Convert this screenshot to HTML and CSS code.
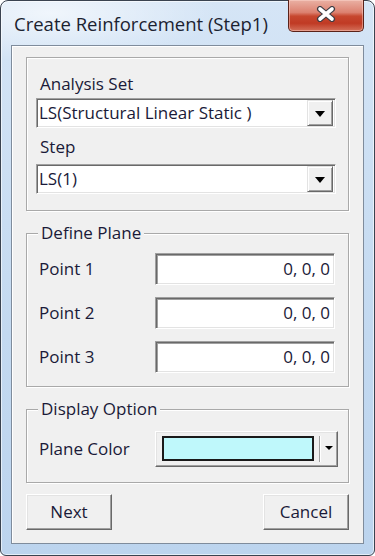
FILE: index.html
```
<!DOCTYPE html>
<html>
<head>
<meta charset="utf-8">
<link rel="stylesheet" href="styles.css">
</head>
<body>
<div class="window">
  <div class="titlebar">
    <span class="title">Create Reinforcement (Step1)</span>
    <div class="close">
      <svg width="20" height="16" viewBox="0 0 20 16">
        <path d="M4 3 L16 13 M16 3 L4 13" stroke="#3c3c44" stroke-width="6" stroke-linecap="round"/>
        <path d="M4 3 L16 13 M16 3 L4 13" stroke="#ffffff" stroke-width="3.6" stroke-linecap="round"/>
      </svg>
    </div>
  </div>
  <div class="client">
    <div class="group g1">
      <div class="label">Analysis Set</div>
      <div class="combo">
        <span class="combo-text">LS(Structural Linear Static )</span>
        <span class="combo-btn"><span class="tri"></span></span>
      </div>
      <div class="label label-step">Step</div>
      <div class="combo">
        <span class="combo-text">LS(1)</span>
        <span class="combo-btn"><span class="tri"></span></span>
      </div>
    </div>
    <div class="group g2">
      <div class="group-title">Define Plane</div>
      <div class="rows">
        <div class="row"><span class="row-label">Point 1</span><div class="field">0, 0, 0</div></div>
        <div class="row"><span class="row-label">Point 2</span><div class="field">0, 0, 0</div></div>
        <div class="row"><span class="row-label">Point 3</span><div class="field">0, 0, 0</div></div>
      </div>
    </div>
    <div class="group g3">
      <div class="group-title">Display Option</div>
      <div class="row color-row">
        <span class="row-label">Plane Color</span>
        <div class="colorbtn"><span class="swatch"></span><span class="sep"></span><span class="tri small"></span></div>
      </div>
    </div>
    <div class="buttons">
      <div class="btn">Next</div>
      <div class="btn">Cancel</div>
    </div>
  </div>
</div>
</body>
</html>
```
FILE: styles.css
```
* { box-sizing: border-box; }
html, body { margin: 0; padding: 0; }
body {
  width: 375px;
  height: 556px;
  overflow: hidden;
  background: #ffffff;
  font-family: "Open Sans", "DejaVu Sans", sans-serif;
  font-size: 17px;
  color: #1a1a38;
}
.window {
  width: 375px;
  height: 556px;
  border: 1px solid #3a4350;
  border-radius: 8px 8px 6px 6px;
  background:
    radial-gradient(ellipse 240px 70px at 50px 12px, rgba(255,255,255,0.65), rgba(255,255,255,0) 70%),
    linear-gradient(to bottom, #d5e5f6 0%, #c3d9f0 60%, #bcd4ee 100%);
  padding: 0 10px 11px 10px;
  display: flex;
  flex-direction: column;
  box-shadow: inset 0 0 0 1px rgba(255,255,255,0.6);
}
.titlebar {
  height: 44px;
  display: flex;
  align-items: flex-start;
}
.title {
  margin-top: 10px;
  padding-left: 3px;
  font-size: 18.5px;
  line-height: 26px;
  color: #1b2230;
}
.close {
  margin-left: auto;
  margin-right: 0;
  margin-top: -1px;
  width: 76px;
  height: 32px;
  border: 1px solid #5a2219;
  border-top: none;
  border-radius: 0 0 5px 5px;
  background: linear-gradient(to bottom, #eab1a4 0%, #dc8170 40%, #c7472f 52%, #c03a24 75%, #d4705a 100%);
  box-shadow: inset 0 0 0 1px rgba(255,220,210,0.45);
  display: flex;
  align-items: center;
  justify-content: center;
}
.close svg { display: block; margin-top: -3px; }
.client {
  height: 499px;
  border: 1px solid #7f8c9c;
  background: #f0f0f0;
  padding: 11px 14px 13px 14px;
  display: flex;
  flex-direction: column;
  box-shadow: inset 1px 1px 0 #ffffff;
}
.group {
  border: 1px solid #a9a9a9;
  box-shadow: inset 1px 1px 0 #ffffff, 1px 1px 0 #ffffff;
  display: flex;
  flex-direction: column;
}
.g1 { height: 154px; padding: 15px 0 0 9px; }
.g2 { height: 154px; margin-top: 22px; }
.g3 { height: 74px; margin-top: 22px; }
.label {
  line-height: 22px;
  padding-left: 4px;
  margin-bottom: 3px;
}
.label-step { margin-top: 8px; margin-bottom: 6px; }
.combo {
  width: 300px;
  height: 30px;
  background: #ffffff;
  border: 1px solid;
  border-color: #a0a0a0 #ffffff #ffffff #a0a0a0;
  box-shadow: inset 1px 1px 0 #696969, inset -1px -1px 0 #e3e3e3;
  display: flex;
  align-items: center;
  padding: 2px;
}
.combo-text {
  flex: 1;
  padding-left: 0;
  line-height: 24px;
}
.combo-btn {
  width: 26px;
  height: 26px;
  background: #f0f0f0;
  border: 1px solid;
  border-color: #e3e3e3 #696969 #696969 #e3e3e3;
  box-shadow: inset 1px 1px 0 #ffffff, inset -1px -1px 0 #a0a0a0;
  display: flex;
  align-items: center;
  justify-content: center;
}
.tri {
  width: 0;
  height: 0;
  border-left: 5px solid transparent;
  border-right: 5px solid transparent;
  border-top: 6px solid #000000;
  margin-top: 1px;
}
.tri.small {
  border-left-width: 4px;
  border-right-width: 4px;
  border-top-width: 4px;
}
.group-title {
  align-self: flex-start;
  margin: -11px 0 0 11px;
  padding: 0 3px;
  line-height: 20px;
  background: #f0f0f0;
}
.rows {
  display: flex;
  flex-direction: column;
  gap: 12px;
  margin-top: 10px;
}
.row {
  display: flex;
  align-items: center;
  padding-left: 12px;
}
.row-label {
  width: 116px;
  line-height: 22px;
}
.field {
  width: 180px;
  height: 32px;
  background: #ffffff;
  border: 1px solid;
  border-color: #a0a0a0 #ffffff #ffffff #a0a0a0;
  box-shadow: inset 1px 1px 0 #696969, inset 2px 2px 0 #a0a0a0, inset -1px -1px 0 #e3e3e3;
  text-align: right;
  padding-right: 4px;
  line-height: 29px;
}
.color-row { margin-top: 12px; }
.colorbtn {
  width: 183px;
  height: 36px;
  background: #f0f0f0;
  border: 1px solid;
  border-color: #ffffff #696969 #696969 #ffffff;
  box-shadow: inset -1px -1px 0 #a0a0a0, inset 1px 1px 0 #e3e3e3;
  display: flex;
  align-items: center;
  padding: 0 0 0 6px;
}
.swatch {
  width: 152px;
  height: 25px;
  background: #bff8fb;
  border: 2px solid #1a1a1a;
  margin-top: -1px;
}
.sep {
  width: 2px;
  height: 26px;
  margin-left: 5px;
  border-left: 1px solid #a0a0a0;
  border-right: 1px solid #ffffff;
}
.colorbtn .tri { margin-left: 4px; margin-top: -2px; }
.buttons {
  margin-top: 11px;
  display: flex;
  justify-content: space-between;
}
.btn {
  width: 86px;
  height: 36px;
  background: #f0f0f0;
  border: 1px solid;
  border-color: #ffffff #696969 #696969 #ffffff;
  box-shadow: inset -1px -1px 0 #a0a0a0, inset 1px 1px 0 #e3e3e3;
  display: flex;
  align-items: center;
  justify-content: center;
  line-height: 22px;
}
```
